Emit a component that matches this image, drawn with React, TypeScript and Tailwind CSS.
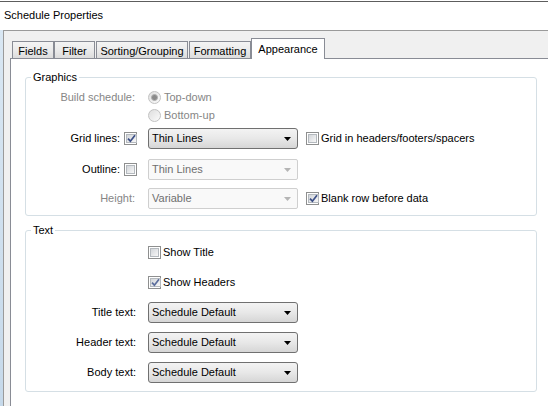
import React from "react";

function Check({ checked = false, dim = false }: { checked?: boolean; dim?: boolean }) {
  return (
    <span className="w-[13px] h-[13px] shrink-0 border border-[#8e8f8f] bg-white p-[1px] flex">
      <span className="flex-1 border border-[#b4b9be] bg-linear-to-br from-[#d3d6da] to-[#f7f7f7] flex items-center justify-center">
        {checked && (
          <svg width="9" height="9" viewBox="0 0 9 9">
            <path
              d="M1 4.6 L3.4 7.2 L8 1.2"
              stroke={dim ? "#5b6d9c" : "#3c4f86"}
              strokeWidth="1.7"
              fill="none"
            />
          </svg>
        )}
      </span>
    </span>
  );
}

function Radio({ selected = false }: { selected?: boolean }) {
  return (
    <span className="w-[13px] h-[13px] shrink-0 rounded-full border border-[#c2c2c2] bg-linear-to-br from-[#dedede] to-[#fbfbfb] flex items-center justify-center">
      {selected && (
        <span className="w-[7px] h-[7px] rounded-full bg-[#8a8a8a] border border-[#b0b0b0]" />
      )}
    </span>
  );
}

function Arrow({ color }: { color: string }) {
  return (
    <svg width="7" height="4" viewBox="0 0 7 4" className="shrink-0">
      <polygon points="0,0 7,0 3.5,4" fill={color} />
    </svg>
  );
}

function Combo({ value, disabled = false }: { value: string; disabled?: boolean }) {
  if (disabled) {
    return (
      <div className="w-[150px] h-[21px] shrink-0 rounded-[2px] border border-[#cfcfcf] bg-[#f9f9f9] flex items-center justify-between pl-[3px] pr-[6px] text-[#6f6f6f]">
        <span>{value}</span>
        <Arrow color="#b5b5b5" />
      </div>
    );
  }
  return (
    <div className="w-[150px] h-[21px] shrink-0 rounded-[3px] border border-[#707070] bg-linear-to-b from-[#f3f3f3] via-[#e8e8e8] to-[#d6d6d6] flex items-center justify-between pl-[3px] pr-[6px] text-black">
      <span>{value}</span>
      <Arrow color="#000000" />
    </div>
  );
}

function Tab({ label, w, ml, active = false }: { label: string; w: string; ml: string; active?: boolean }) {
  if (active) {
    return (
      <div
        className={`${w} ${ml} h-[21px] -mb-[1px] relative z-10 border-t border-l border-r border-[#898c95] bg-white flex items-start justify-center pt-[2px]`}
      >
        {label}
      </div>
    );
  }
  return (
    <div
      className={`${w} ${ml} h-[17px] border-t border-l border-r border-[#898c95] bg-linear-to-b from-[#f4f4f4] via-[#ebebeb] to-[#dcdcdc] flex items-center justify-center pt-[2px]`}
    >
      {label}
    </div>
  );
}

export default function App() {
  return (
    <div className="w-[548px] h-[406px] overflow-hidden bg-white font-['Liberation_Sans',Arial,sans-serif] text-[11px] text-black flex flex-col">
      <div className="h-[1px] mt-[1px] bg-[#5d5d5d] shrink-0" />
      <div className="h-[28px] shrink-0 flex items-center pl-[4px] pb-[1px]">Schedule Properties</div>
      <div className="flex-1 flex min-h-0">
        <div className="w-[3px] shrink-0 bg-linear-to-b from-[#d9e7f3] to-[#c6d9ea]" />
        <div className="flex-1 border-l border-t border-[#9a9a9a] bg-[#f0f0f0] pl-[6px] pt-[7px] flex flex-col min-w-0">
          <div className="h-[20px] flex items-end pl-[2px] shrink-0">
            <Tab label="Fields" w="w-[42px]" ml="ml-0" />
            <Tab label="Filter" w="w-[41px]" ml="ml-0" />
            <Tab label="Sorting/Grouping" w="w-[92px]" ml="ml-[1px]" />
            <Tab label="Formatting" w="w-[62px]" ml="ml-[1px]" />
            <Tab label="Appearance" w="w-[74px]" ml="ml-0" active />
          </div>
          <div className="flex-1 border-l border-t border-[#898c95] bg-white pl-[14px]">
            {/* Graphics */}
            <fieldset className="mt-[11px] w-[512px] border border-[#d5dfe5] rounded-[3px] pb-[6px]">
              <legend className="ml-[5px] px-[2px] leading-[14px]">Graphics</legend>
              <div className="mt-[4px] h-[18px] flex items-center">
                <div className="w-[111px] flex justify-end pr-[2px] text-[#868686]">Build schedule:</div>
                <div className="ml-[11px] flex items-center gap-[3px] text-[#868686]">
                  <Radio selected />
                  <span>Top-down</span>
                </div>
              </div>
              <div className="h-[18px] flex items-center">
                <div className="w-[111px]" />
                <div className="ml-[11px] flex items-center gap-[3px] text-[#868686]">
                  <Radio />
                  <span>Bottom-up</span>
                </div>
              </div>
              <div className="mt-[4px] h-[21px] flex items-center">
                <div className="w-[111px] flex justify-end items-center gap-[4px]">
                  <span>Grid lines:</span>
                  <Check checked />
                </div>
                <div className="ml-[11px]">
                  <Combo value="Thin Lines" />
                </div>
                <div className="ml-[8px] flex items-center gap-[2px]">
                  <Check />
                  <span>Grid in headers/footers/spacers</span>
                </div>
              </div>
              <div className="mt-[10px] h-[21px] flex items-center">
                <div className="w-[111px] flex justify-end items-center gap-[4px]">
                  <span>Outline:</span>
                  <Check />
                </div>
                <div className="ml-[11px]">
                  <Combo value="Thin Lines" disabled />
                </div>
              </div>
              <div className="mt-[8px] h-[21px] flex items-center">
                <div className="w-[111px] flex justify-end pr-[2px] text-[#868686]">Height:</div>
                <div className="ml-[11px]">
                  <Combo value="Variable" disabled />
                </div>
                <div className="ml-[8px] flex items-center gap-[2px]">
                  <Check checked />
                  <span>Blank row before data</span>
                </div>
              </div>
            </fieldset>

            {/* Text */}
            <fieldset className="mt-[7px] w-[512px] border border-[#d5dfe5] rounded-[3px] pb-[8px]">
              <legend className="ml-[5px] px-[2px] leading-[14px]">Text</legend>
              <div className="mt-[6px] h-[18px] flex items-center">
                <div className="w-[111px]" />
                <div className="ml-[11px] flex items-center gap-[2px]">
                  <Check />
                  <span>Show Title</span>
                </div>
              </div>
              <div className="mt-[12px] h-[18px] flex items-center">
                <div className="w-[111px]" />
                <div className="ml-[11px] flex items-center gap-[2px]">
                  <Check checked dim />
                  <span>Show Headers</span>
                </div>
              </div>
              <div className="mt-[11px] h-[21px] flex items-center">
                <div className="w-[111px] flex justify-end pr-[1px]">Title text:</div>
                <div className="ml-[11px]">
                  <Combo value="Schedule Default" />
                </div>
              </div>
              <div className="mt-[9px] h-[21px] flex items-center">
                <div className="w-[111px] flex justify-end pr-[1px]">Header text:</div>
                <div className="ml-[11px]">
                  <Combo value="Schedule Default" />
                </div>
              </div>
              <div className="mt-[9px] h-[21px] flex items-center">
                <div className="w-[111px] flex justify-end pr-[1px]">Body text:</div>
                <div className="ml-[11px]">
                  <Combo value="Schedule Default" />
                </div>
              </div>
            </fieldset>
          </div>
        </div>
      </div>
    </div>
  );
}
